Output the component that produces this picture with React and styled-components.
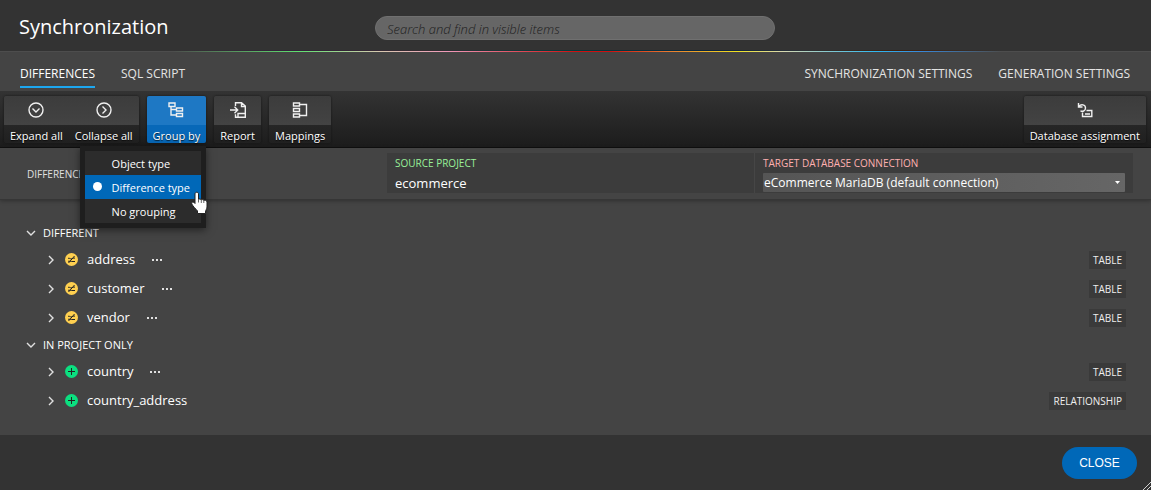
import React from "react";
import styled, { createGlobalStyle } from "styled-components";

const GlobalStyle = createGlobalStyle`
  *, *::before, *::after { box-sizing: border-box; }
  body {
    margin: 0;
    background: #444444;
    color: #ffffff;
    font-family: "Open Sans", "Noto Sans", sans-serif;
    font-size: 13px;
  }
  button, input, select { font: inherit; color: inherit; margin: 0; }
`;

const Window = styled.div`
  display: flex;
  flex-direction: column;
  min-height: 100vh;
`;

const Header = styled.header`
  display: grid;
  grid-template-columns: 1fr minmax(200px, 400px) 1fr;
  align-items: center;
  height: 50px;
  padding: 5px 20px 0 19px;
  background: #333333;
`;

const Title = styled.h1`
  margin: 0;
  padding-bottom: 2px;
  font-size: 20px;
  font-weight: 400;
  line-height: 28px;
`;

const Search = styled.input`
  width: 100%;
  height: 24px;
  padding: 2px 12px 0 11px;
  border: 1px solid #707070;
  border-radius: 12px;
  background: #666666;
  font-size: 13px;
  font-style: italic;
  font-weight: 300;
  &::placeholder { color: #202020; opacity: 1; }
`;

const Rainbow = styled.div`
  height: 2px;
  background:
    linear-gradient(90deg, #333333 15%, #34203a 25%, #332c30 37%, #004040 50%, #0c2440 62%, #2c3034 70%, #40200c 78%, #333333 87%) top / 100% 1px no-repeat,
    linear-gradient(90deg, #4d4d4d 15%, #60e070 26%, #d8c8b0 33%, #f098b8 39%, #d01010 50%, #d01010 53%, #e87830 58%, #f0e020 64%, #d8d8b0 68%, #30b8f0 76%, #3888d8 80%, #4d4d4d 87%) bottom / 100% 1px no-repeat;
`;

const Tabs = styled.nav`
  display: flex;
  align-items: flex-start;
  height: 39px;
  padding: 13px 21px 0 20px;
  gap: 26px;
  background: #444444;
`;

const Tab = styled.a`
  padding-bottom: 3px;
  border-bottom: 2px solid ${(p) => (p.$active ? "#1da7f0" : "transparent")};
  color: ${(p) => (p.$active ? "#ffffff" : "#e4e4e4")};
  font-size: 12px;
  line-height: 18px;
  text-decoration: none;
  white-space: nowrap;
`;

const Spacer = styled.div`
  flex: 1;
`;

const Toolbar = styled.div`
  display: flex;
  gap: 8px;
  height: 57px;
  padding: 5px 5px 5px 4px;
  background: linear-gradient(#333333, #1c1c1c);
  border-bottom: 1px solid #101010;
`;

const ToolGroup = styled.div`
  position: relative;
  display: flex;
  height: 47px;
  border-radius: 2px;
  background: ${(p) =>
    p.$active
      ? "linear-gradient(#1e78c4 0 29px, #0868b8 29px)"
      : "linear-gradient(#3c3c3c, #434343 29px, #262626 29px, #202020)"};
  box-shadow: 0 0 2px #111111;
`;

const ToolButton = styled.button`
  display: flex;
  flex-direction: column;
  align-items: center;
  padding: 0 6px;
  border: 0;
  background: none;
  font-size: 11px;
  line-height: 14px;
  white-space: nowrap;
  text-shadow: 0 1px 1px rgba(0, 0, 0, 0.8);
  svg { margin: 6px 0 11px; }
`;

const Menu = styled.ul`
  position: absolute;
  z-index: 2;
  top: 50px;
  left: -67px;
  width: 126px;
  margin: 0;
  padding: 5px;
  list-style: none;
  background: #1e1e1e;
  box-shadow: 0 2px 8px rgba(0, 0, 0, 0.5);
`;

const MenuItem = styled.button`
  display: flex;
  align-items: center;
  width: 100%;
  height: 24px;
  padding: 0 0 0 8px;
  border: 0;
  background: ${(p) => (p.$active ? "#0068b8" : "#2c2c2c")};
  font-size: 11px;
  white-space: nowrap;
`;

const Mark = styled.span`
  width: 9px;
  height: 9px;
  margin: 0 10px 2px 0;
  border-radius: 50%;
  background: ${(p) => (p.$on ? "#ffffff" : "transparent")};
`;

const Pointer = styled.svg`
  position: absolute;
  z-index: 3;
  top: 95px;
  left: 44px;
  pointer-events: none;
`;

const InfoBar = styled.section`
  display: grid;
  grid-template-columns: minmax(0, 1fr) minmax(0, 1fr) minmax(0, 379px);
  height: 52px;
  padding: 5px 18px 6px 20px;
  background: #444444;
  border-bottom: 1px solid #363636;
  box-shadow: 0 1px 4px rgba(0, 0, 0, 0.3);
`;

const InfoLabel = styled.h2`
  align-self: center;
  margin: 0;
  padding: 2px 0 0 7px;
  color: #e0e0e0;
  font-size: 10px;
  font-weight: 400;
`;

const Panel = styled.div`
  display: flex;
  flex-direction: column;
  gap: 3px;
  padding: 3px 8px 0;
  background: #3c3c3c;
  & + & { border-left: 1px solid #464646; }
`;

const PanelLabel = styled.label`
  color: ${(p) => p.$color};
  font-size: 10px;
  line-height: 14px;
`;

const PanelValue = styled.output`
  font-size: 13px;
  line-height: 20px;
`;

const SelectBox = styled.div`
  position: relative;
  svg { position: absolute; top: 8px; right: 4px; pointer-events: none; }
`;

const Select = styled.select`
  display: block;
  width: 100%;
  height: 19px;
  padding: 0 16px 0 1px;
  border: 0;
  border-radius: 1px;
  background: linear-gradient(90deg, #555555, #666666);
  appearance: none;
  font-size: 12px;
  line-height: 18px;
`;

const Tree = styled.main`
  flex: 1;
  padding: 20px 25px 20px 26px;
`;

const GroupHead = styled.button`
  display: flex;
  align-items: center;
  gap: 7px;
  height: 25px;
  padding: 0;
  border: 0;
  background: none;
  font-size: 11px;
`;

const Rows = styled.ul`
  margin: 0;
  padding: 0;
  list-style: none;
`;

const Row = styled.li`
  display: flex;
  align-items: center;
  height: 29px;
  padding-left: 20px;
`;

const IconButton = styled.button`
  display: flex;
  padding: 0;
  border: 0;
  background: none;
`;

const Status = styled.svg`
  margin: 0 9px 0 9px;
`;

const Name = styled.span`
  margin-right: 16px;
  padding-bottom: 2px;
  font-size: 13px;
  line-height: 18px;
`;

const Badge = styled.span`
  padding: 0 4px;
  background: #3a3a3a;
  color: #eeeeee;
  font-size: 10px;
  line-height: 18px;
`;

const Footer = styled.footer`
  position: relative;
  display: flex;
  justify-content: flex-end;
  height: 55px;
  padding: 12px 14px;
  background: #333333;
`;

const CloseButton = styled.button`
  width: 75px;
  height: 32px;
  border: 0;
  border-radius: 16px;
  background: #0068b8;
  font-family: "Liberation Sans", Arial, sans-serif;
  font-size: 12px;
`;

const Grip = styled.svg`
  position: absolute;
  right: 0;
  bottom: 0;
`;

const line = { fill: "none", stroke: "#f0f0f0", strokeWidth: 1.4 };

const icons = {
  expand: (
    <g {...line}>
      <circle cx="8" cy="8" r="7" />
      <path d="M4.500 6.500 8 10l3.500-3.500" />
    </g>
  ),
  collapse: (
    <g {...line}>
      <circle cx="8" cy="8" r="7" />
      <path d="M6.500 4.500 10 8l-3.500 3.500" />
    </g>
  ),
  group: (
    <g {...line}>
      <path d="M1 1h6v3.500H1zM8.500 6h6v3h-6zM8.500 11.500h6v3h-6zM3 4.500V13h5.500M3 7.500h5.500" />
    </g>
  ),
  report: (
    <g {...line}>
      <path d="M5.500 4V.700h6L15.300 4v11.300H5.500v-3M11.500 1v3.500h3.500M0 8h7.500M4.500 4.800 7.700 8l-3.200 3.200M8 15v-3.500h7" />
    </g>
  ),
  mappings: (
    <g {...line}>
      <path d="M1.500 1h6v3h-6zM1.500 6.500h6v3h-6zM1.500 12h6v3h-6zM7.500 2.500h7v11h-7" />
    </g>
  ),
  assign: (
    <g {...line}>
      <path d="M1.500 1v4H5.500M2 4.500C4 1.500 8.500 2.500 8.500 6S5.500 9.500 3.500 9M5.500 10.500v4h9.300V8.500H9.500M8 12h5" />
    </g>
  ),
};

const ToolIcon = ({ name }) => (
  <svg width="16" height="16" viewBox="0 0 16 16" aria-hidden="true">
    {icons[name]}
  </svg>
);

const Tool = ({ icon, children, ...rest }) => (
  <ToolButton type="button" {...rest}>
    <ToolIcon name={icon} />
    {children}
  </ToolButton>
);

const Chevron = ({ down }) => (
  <svg width="10" height="10" viewBox="0 0 10 10" fill="none" stroke="#e0e0e0" strokeWidth="1.4" aria-hidden="true">
    <path d={down ? "M1 3l4 4 4-4" : "M3 1l4 4-4 4"} />
  </svg>
);

const StatusIcon = ({ kind }) => (
  <Status width="13" height="13" viewBox="0 0 13 13" aria-hidden="true">
    <circle cx="6.5" cy="6.5" r="6.5" fill={kind === "different" ? "#ffd050" : "#0be080"} />
    <path
      d={kind === "different" ? "M3 5.500c1.200-1 2.200.700 3.500.300S9 5 10 5M3 8.500c1.200-1 2.200.300 3.500 0H10M3.500 10 9.500 3" : "M6.500 3v7M3 6.500h7"}
      fill="none"
      stroke="#222222"
      strokeWidth="1"
    />
  </Status>
);

const groups = [
  {
    title: "DIFFERENT",
    kind: "different",
    rows: [
      { name: "address", type: "TABLE", more: true },
      { name: "customer", type: "TABLE", more: true },
      { name: "vendor", type: "TABLE", more: true },
    ],
  },
  {
    title: "IN PROJECT ONLY",
    kind: "added",
    rows: [
      { name: "country", type: "TABLE", more: true },
      { name: "country_address", type: "RELATIONSHIP" },
    ],
  },
];

const grouping = ["Object type", "Difference type", "No grouping"];

export default function App() {
  return (
    <Window>
      <GlobalStyle />
      <Header>
        <Title>Synchronization</Title>
        <Search type="search" aria-label="Search" placeholder="Search and find in visible items" />
      </Header>
      <Rainbow />
      <Tabs>
        <Tab href="#differences" $active>DIFFERENCES</Tab>
        <Tab href="#sql">SQL SCRIPT</Tab>
        <Spacer />
        <Tab href="#sync">SYNCHRONIZATION SETTINGS</Tab>
        <Tab href="#generation">GENERATION SETTINGS</Tab>
      </Tabs>
      <Toolbar>
        <ToolGroup>
          <Tool icon="expand">Expand all</Tool>
          <Tool icon="collapse">Collapse all</Tool>
        </ToolGroup>
        <ToolGroup $active>
          <Tool icon="group" aria-expanded="true">Group by</Tool>
          <Menu>
            {grouping.map((label, i) => (
              <li key={label}>
                <MenuItem type="button" $active={i === 1}>
                  <Mark $on={i === 1} />
                  {label}
                </MenuItem>
              </li>
            ))}
          </Menu>
          <Pointer width="18" height="24" viewBox="0 0 18 24" aria-hidden="true">
            <path
              d="M4 3c0-2.300 3.500-2.300 3.500 0v5.500c.700-.800 2.500-.600 2.800.500.600-.700 2.300-.500 2.500.600.900-.700 3.200-.300 3.200 1.400v5c0 2-1.500 3-1.500 5v1.500H6.500V20C5 18 2 15.500.800 13c-.800-1.700 1-2.700 2.300-1.500L4 12.500z"
              fill="#ffffff"
              stroke="#222222"
              strokeWidth="1"
            />
            <path d="M7.500 8.500v3M10.300 9v3M12.800 9.600V12" stroke="#666666" strokeWidth="1" />
          </Pointer>
        </ToolGroup>
        <ToolGroup>
          <Tool icon="report">Report</Tool>
        </ToolGroup>
        <ToolGroup>
          <Tool icon="mappings">Mappings</Tool>
        </ToolGroup>
        <Spacer />
        <ToolGroup>
          <Tool icon="assign">Database assignment</Tool>
        </ToolGroup>
      </Toolbar>
      <InfoBar>
        <InfoLabel>DIFFERENCES</InfoLabel>
        <Panel>
          <PanelLabel htmlFor="source" $color="#98f098">SOURCE PROJECT</PanelLabel>
          <PanelValue id="source">ecommerce</PanelValue>
        </Panel>
        <Panel>
          <PanelLabel htmlFor="target" $color="#ffb0b0">TARGET DATABASE CONNECTION</PanelLabel>
          <SelectBox>
            <Select id="target">
              <option>eCommerce MariaDB (default connection)</option>
            </Select>
            <svg width="7" height="4" viewBox="0 0 7 4" aria-hidden="true">
              <path d="M1 0h5L3.500 3z" fill="#ffffff" />
            </svg>
          </SelectBox>
        </Panel>
      </InfoBar>
      <Tree>
        {groups.map((group) => (
          <section key={group.title}>
            <GroupHead type="button">
              <Chevron down />
              {group.title}
            </GroupHead>
            <Rows>
              {group.rows.map((row) => (
                <Row key={row.name}>
                  <IconButton type="button" aria-label={"Expand " + row.name}>
                    <Chevron />
                  </IconButton>
                  <StatusIcon kind={group.kind} />
                  <Name>{row.name}</Name>
                  {row.more && (
                    <IconButton type="button" aria-label={"More about " + row.name}>
                      <svg width="12" height="4" viewBox="0 0 12 4" fill="#e0e0e0" aria-hidden="true">
                        <path d="M1 1h2v2H1zM5 1h2v2H5zM9 1h2v2H9z" />
                      </svg>
                    </IconButton>
                  )}
                  <Spacer />
                  <Badge>{row.type}</Badge>
                </Row>
              ))}
            </Rows>
          </section>
        ))}
      </Tree>
      <Footer>
        <CloseButton type="button">CLOSE</CloseButton>
        <Grip width="8" height="8" viewBox="0 0 8 8" aria-hidden="true">
          <path d="M0 8l8-8M4 8l4-4" stroke="#d0d0d0" fill="none" />
        </Grip>
      </Footer>
    </Window>
  );
}
